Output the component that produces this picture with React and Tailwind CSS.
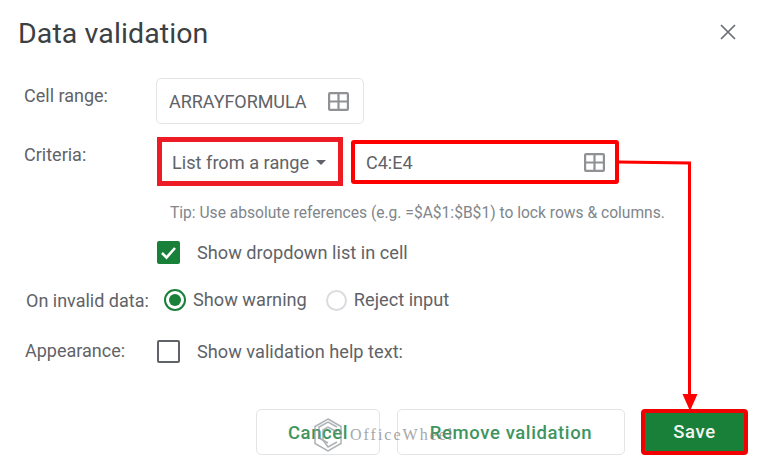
const roboto = { fontFamily: 'Roboto, sans-serif' };

function GridIcon({ className }) {
  return (
    <svg viewBox="0 0 21 19" className={className} fill="none" stroke="#8f9194" strokeWidth="2.2">
      <rect x="1.1" y="1.1" width="18.8" height="16.8" rx="1" />
      <path d="M10.5 1v17M1 9.5h19" />
    </svg>
  );
}

function Label({ children, className = '' }) {
  return <div className={`text-[18px] whitespace-nowrap text-[#5f6368] ${className}`}>{children}</div>;
}

export default function App() {
  return (
    <div className="relative w-[768px] h-[473px] overflow-hidden bg-white font-['Roboto',sans-serif] antialiased" style={roboto}>
      <header className="flex items-start justify-between pl-[18px] pr-[32px] pt-[15px] h-[78px]">
        <h1 className="text-[28.5px] leading-[38px] tracking-[0.1px] text-[#3c4043] font-normal">Data validation</h1>
        <svg viewBox="0 0 16 16" className="w-4 h-4 mt-[9px]" stroke="#6b6f73" strokeWidth="1.7" fill="none">
          <path d="M1 1l14 14M15 1L1 15" />
        </svg>
      </header>

      <div className="flex h-[59px]">
        <Label className="w-[156px] pl-6 pt-[6px] leading-6">Cell range:</Label>
        <div className="flex items-center justify-between w-[208px] h-[46px] pl-[12px] pr-[14px] border border-[#e3e4e6] rounded-[5px]">
          <span className="text-[18px] tracking-[-0.05px] text-[#5f6368]">ARRAYFORMULA</span>
          <GridIcon className="w-[21px] h-[19px]" />
        </div>
      </div>

      <div className="flex h-[49px]">
        <Label className="w-[157px] pl-6 pt-[6px] leading-6">Criteria:</Label>
        <div className="flex items-center w-[186px] h-[49px] pl-[10px] border-[5px] border-[#ed1c24] text-[18.2px] text-[#5f6368]">
          <span className="mt-[3px]">List from a range</span>
          <span className="ml-[7px] mt-[1px] w-0 h-0 border-x-[5px] border-x-transparent border-t-[5px] border-t-[#5f6368]" />
        </div>
        <div className="flex items-center justify-between w-[268px] h-[44px] mt-[3px] ml-2 pl-[11px] pr-[10px] border-4 border-[#ff0000] rounded-[3px]">
          <span className="text-[18px] text-[#5f6368]">C4:E4</span>
          <GridIcon className="w-[21px] h-[19px]" />
        </div>
      </div>

      <p className="pl-[170px] mt-[17px] h-[21px] text-[15.6px] whitespace-nowrap leading-[21px] text-[#80868b]">
        Tip: Use absolute references (e.g. =$A$1:$B$1) to lock rows &amp; columns.
      </p>

      <div className="flex items-center pl-[157px] mt-[17px] h-[23px]">
        <span className="flex items-center justify-center w-[23px] h-[23px] rounded-[2px] bg-[#188038]">
          <svg viewBox="0 0 23 23" className="w-[23px] h-[23px]" fill="none" stroke="#fff" strokeWidth="2.6">
            <path d="M5 12l4.5 4.5L18 7" />
          </svg>
        </span>
        <span className="ml-[17px] mt-[1px] text-[18.2px] whitespace-nowrap text-[#5f6368]">Show dropdown list in cell</span>
      </div>

      <div className="flex items-center mt-[24px] h-[24px]">
        <Label className="w-[164px] pl-[26px]">On invalid data:</Label>
        <span className="flex items-center justify-center w-[22px] h-[22px] rounded-full border-2 border-[#188038]">
          <span className="w-[12px] h-[12px] rounded-full bg-[#188038]" />
        </span>
        <span className="ml-[7px] text-[18.2px] whitespace-nowrap text-[#5f6368]">Show warning</span>
        <span className="ml-[19px] w-[21px] h-[21px] rounded-full border-2 border-[#dadce0]" />
        <span className="ml-[7px] text-[18.2px] whitespace-nowrap text-[#5f6368]">Reject input</span>
      </div>

      <div className="flex items-center mt-[27px] h-[24px]">
        <Label className="w-[157px] pl-[25px] -mt-[2px]">Appearance:</Label>
        <span className="w-[23px] h-[23px] rounded-[2px] border-2 border-[#5f6368]" />
        <span className="ml-[17px] mt-[2px] text-[18.2px] whitespace-nowrap text-[#5f6368]">Show validation help text:</span>
      </div>

      <footer className="flex pl-[256px] mt-[46px]">
        <button className="w-[124px] h-[46px] pt-[3px] rounded-[5px] border border-[#e3e4e6] text-[18.5px] tracking-[0.6px] font-medium text-[#3f9560]">Cancel</button>
        <button className="ml-[17px] w-[228px] h-[46px] pt-[3px] rounded-[5px] border border-[#e3e4e6] text-[18.5px] tracking-[0.6px] font-medium text-[#3f9560]">Remove validation</button>
        <button className="ml-[16px] w-[107px] h-[46px] pt-[1px] rounded-[4px] border-4 border-[#f00000] bg-[#188038] text-[18.5px] tracking-[0.6px] font-medium text-[#f1f5f2]">Save</button>
      </footer>

      {/* annotation connector and arrow */}
      <svg className="absolute left-0 top-0 w-[768px] h-[473px] pointer-events-none" viewBox="0 0 768 473" fill="none">
        <path d="M618 162L689.5 163V398" stroke="#ff0000" strokeWidth="3" />
        <path d="M682.5 394H697.5L690 411Z" fill="#ff0000" />
      </svg>

      {/* watermark */}
      <div className="absolute left-[313px] top-[418px] flex items-center pointer-events-none opacity-70">
        <svg viewBox="0 0 30 34" className="w-[30px] h-[34px]" fill="none" stroke="#8d9296" strokeWidth="1.5">
          <path d="M15 1L28 8.5V25.5L15 33L2 25.5V8.5Z" />
          <path d="M24 9L15 4L6 9V20L15 25" />
          <path d="M24 14L15 9L10 12V22L15 29L24 24" />
        </svg>
        <span className="ml-[7px] text-[16px] tracking-[2px] text-[#7d8287] font-['Liberation_Serif',serif]">OfficeWheel</span>
      </div>
    </div>
  );
}
